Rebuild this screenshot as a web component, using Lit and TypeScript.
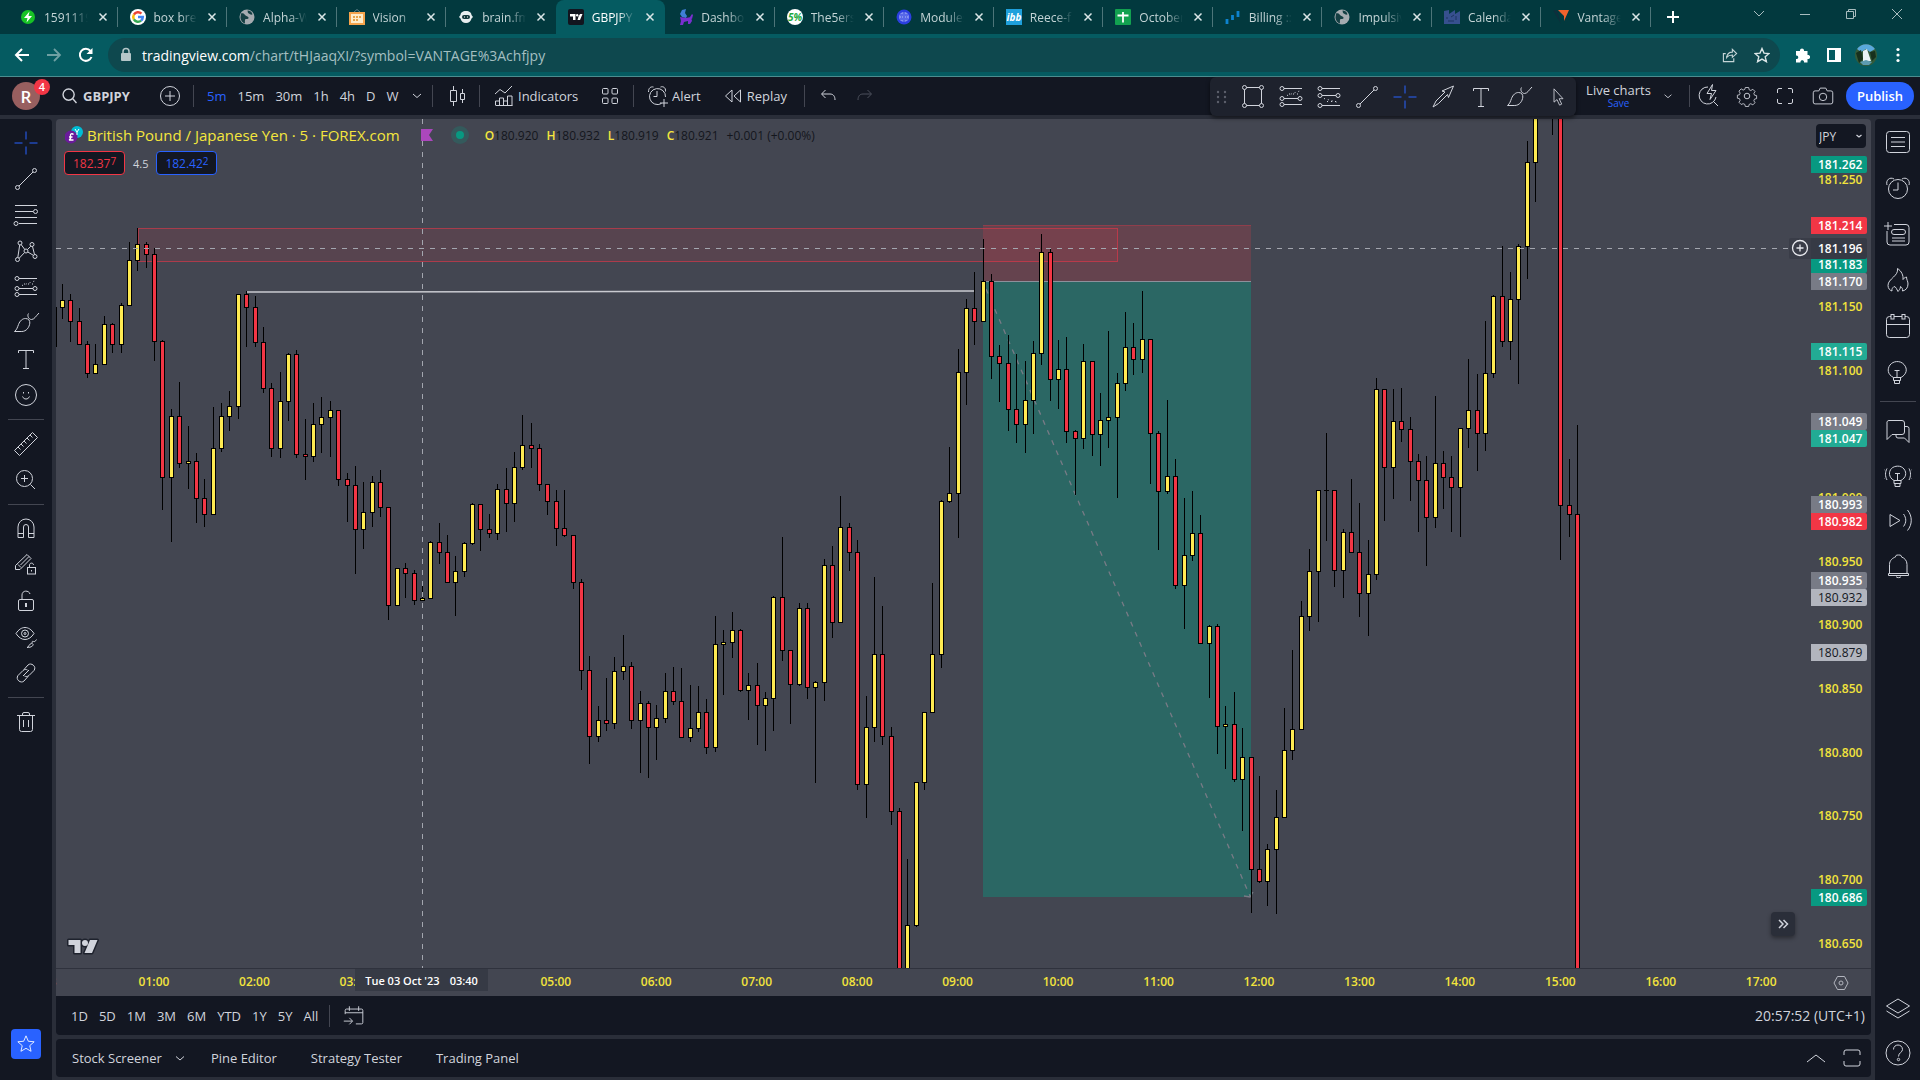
import { LitElement, html, svg, css, TemplateResult } from "lit";
import { customElement } from "lit/decorators.js";
import { classMap } from "lit/directives/class-map.js";

type Art = TemplateResult;

const icon = (body: Art, size = 28, box = 28) => html`<svg class="icon" width=${size} height=${size} viewBox="0 0 ${box} ${box}" fill="none" stroke="currentColor" aria-hidden="true">${body}</svg>`;

/* ---------- icons on a 28px grid ---------- */
const art: Record<string, Art> = {
  cross: svg`<path d="M14 2.5v8M14 17.5v8M2.5 14h8M17.5 14h8"/>`,
  trend: svg`<circle cx="5.5" cy="22.5" r="2"/><circle cx="22.5" cy="5.5" r="2"/><path d="M7 21 21 7"/>`,
  fib: svg`<path d="M3 4.500h22M3 10.500h18M3 16.500h22M7 22.500h18"/><circle cx="23.500" cy="10.500" r="2"/><circle cx="4" cy="22.500" r="2"/>`,
  pattern: svg`<circle cx="8" cy="6" r="2"/><circle cx="20" cy="7.500" r="2"/><circle cx="5.500" cy="22.500" r="2"/><circle cx="14" cy="14" r="2"/><circle cx="23" cy="19.500" r="2"/><path d="M7.700 8 5.800 20.500M9.200 7.700l3.600 4.800M15.500 12.500l3.300-3.300M20.500 9.500l2 8M7.200 21.200l5.300-5.600M15.800 15l5.400 3.200"/>`,
  forecast: svg`<circle cx="5" cy="5.500" r="2"/><circle cx="5" cy="15.500" r="2"/><circle cx="23" cy="15.500" r="2"/><circle cx="5" cy="21.500" r="2"/><path d="M7 5.500h18M7 15.500h14M7 21.500h18"/><path stroke-dasharray="1 3" d="M10 12.500 24 7.500M12 11h11"/>`,
  forecast2: svg`<circle cx="5" cy="5.500" r="2"/><circle cx="5" cy="12.500" r="2"/><circle cx="23" cy="12.500" r="2"/><circle cx="5" cy="22.500" r="2"/><path d="M7 5.500h18M7 12.500h14M7 22.500h18"/><path stroke-dasharray="1 3" d="M9 15.500l14 4M12 18.500h11"/>`,
  brush: svg`<path d="M2.500 22.500c2.500-2 3-4.500 4-7 1.500-3.800 4-6 7-6 3.200 0 4.500 2.300 4.300 4.600-.4 4.200-3.500 8.400-8 8.400z"/><path d="M16.500 4.500c-1.500 2 0 6 3 6 3-.2 4-3 7.500-6.500"/>`,
  text: svg`<path d="M6.500 8V5.500h15V8M14 5.500v18M11 23.500h6"/>`,
  smile: svg`<circle cx="14" cy="14" r="10.500"/><path d="M11.500 11v1.500M16.500 11v1.500M10.500 15.500c.8 1.800 2 2.500 3.500 2.500s2.700-.7 3.500-2.500"/>`,
  ruler: svg`<path d="M2.500 20.500 20.500 2.500 25.500 7.500 7.500 25.500zM6 17l2.500 2.500M9 14l2.500 2.500M12 11l2.500 2.500M15 8l2.500 2.500M18 5l2.500 2.500"/>`,
  zoom: svg`<circle cx="12.500" cy="12.500" r="8"/><path d="M12.500 9v7M9 12.500h7M18.500 18.500l4.500 4.500"/>`,
  magnet: svg`<path d="M6 22.500V12a8 8 0 0 1 16 0v10.500h-5.500V12a2.500 2.500 0 0 0-5 0v10.500zM6 18.500h5.500M16.500 18.500H22"/>`,
  pencilLock: svg`<path d="M3.500 18.500v-4L15 3.500l4 4-11 11zM6 13.500l3 3M8.500 14 17 5.500"/><rect x="15.500" y="16.500" width="8" height="6.500"/><path d="M17.500 16.500V14c0-2.500 4-2.500 4 0M19.500 19v1.500"/>`,
  lock: svg`<rect x="6.500" y="12.500" width="15" height="11" rx="1.500"/><path d="M10 12.500V8c0-5 7-5 8-1"/><path d="M14 16v4" stroke-width="2"/>`,
  eye: svg`<path d="M4 10.500C9 2.500 17 2.500 22 10.500 17 18.500 9 18.500 4 10.500z"/><circle cx="13" cy="10.500" r="3.500"/><circle cx="13" cy="10.500" r="1"/><path d="M15 24.500c2 0 1.500-3.500 4.500-4 3 0 2 4-4.500 4zM20 20c0-2 1-2 1.500-1.500s2 0 3-2"/>`,
  link: svg`<path d="M12 10.500l4-4.500c3-3 9 1.500 6 5.500l-5 5c-1.500 1.300-3 1.300-4.500.5M16 17.500l-4 4.500c-3 3-9-1.500-6-5.500l5-5c1.500-1.300 3-1.300 4.500-.5"/><path d="M11 17l6-6"/>`,
  trash: svg`<path d="M5 7.500h18M7.500 7.500v14a2 2 0 0 0 2 2h9a2 2 0 0 0 2-2v-14M10.500 7V6a1.500 1.500 0 0 1 1.500-1.500h4A1.500 1.500 0 0 1 17.500 6v1M11.500 12v7M16.500 12v7"/>`,
  star: svg`<path d="M14 4.500l2.700 6.300 6.800.6-5.100 4.500 1.500 6.600-5.900-3.500-5.900 3.500 1.500-6.600-5.100-4.500 6.800-.6z"/>`,
  search: svg`<circle cx="12.500" cy="12.500" r="6" stroke-width="1.500"/><path stroke-width="1.500" d="M17 17l4 4.500"/>`,
  plusCircle: svg`<circle cx="14" cy="14" r="9.500"/><path d="M14 9v10M9 14h10"/>`,
  down: svg`<path d="M10 12.500l4 3.500 4-3.500"/>`,
  up: svg`<path d="M5 18l9-7 9 7"/>`,
  candles: svg`<path d="M10.500 4v4M10.500 20v4M7.500 8.500h6v11h-6zM19.500 7v4M19.500 17v4M17.500 11.500h4v6h-4z"/>`,
  indicators: svg`<path d="M5 12l5-4.500 5 3.500 7-7M5.500 23.500h17M5.500 23v-4h4v4M9.500 19v-3h4v7M13.500 19h4v4M17.500 19v-5h4.500v9.500"/>`,
  grid: svg`<rect x="6.500" y="6.500" width="5.500" height="5.500" rx="1"/><rect x="16" y="6.500" width="5.500" height="5.500" rx="1"/><rect x="6.500" y="16" width="5.500" height="5.500" rx="1"/><rect x="16" y="16" width="5.500" height="5.500" rx="1"/>`,
  alert: svg`<path d="M17.500 21.500A8 8 0 1 1 21.500 15M13 9v5.500h-3.500M4.500 10c0-4.500 2.500-5.500 5-5M16.500 5c2.500-1 5.500.5 5 4.500M20 17v8M16 21h8"/>`,
  replay: svg`<path d="M13 8v12l-6.500-6zM21.500 8v12L15 14z"/>`,
  undo: svg`<path d="M11.500 8l-4 4 4 4M8 12h8c3.500 0 5 2.500 5 6"/>`,
  redo: svg`<path d="M16.500 8l4 4-4 4M20 12h-8c-3.500 0-5 2.500-5 6"/>`,
  rect: svg`<circle cx="5.500" cy="4.500" r="2"/><circle cx="22.500" cy="4.500" r="2"/><circle cx="5.500" cy="22.500" r="2"/><circle cx="22.500" cy="22.500" r="2"/><path d="M7.500 4.500h13M7.500 22.500h13M5.500 6.500v14M22.500 6.500v14"/>`,
  arrowTool: svg`<path d="M4 24l3-6 9-9-3-1 11.500-5-5 11.500-1-3-9 9z"/>`,
  pointer: svg`<path d="M10.500 4.500v15.500l3.500-3 3 6.500 2.500-1.200-3-6.300h4.500z"/>`,
  zap: svg`<path d="M13 5a8.500 8.500 0 1 0 8 10M18 19l5 5M17.500 2.500l-5.500 9h4.500l-1.500 6 6-9h-4.500z"/>`,
  gear: svg`<circle cx="14" cy="14" r="3"/><path d="M12 4.500h4l.6 2.700 2 .9 2.400-1.500 2.600 2.700-1.400 2.400.8 2 2.500.5v3.600l-2.500.6-.8 2 1.400 2.300-2.600 2.600-2.400-1.400-2 .8-.6 2.500h-4l-.6-2.500-2-.8L7 24.800l-2.600-2.600 1.400-2.300-.8-2-2.500-.6v-3.600l2.500-.5.8-2L4.400 8.800 7 6.100l2.400 1.500 2-.9z" transform="translate(1.400 .8) scale(.9)"/>`,
  full: svg`<path d="M6.500 11V8A1.500 1.500 0 0 1 8 6.500h3M17 6.500h3A1.500 1.500 0 0 1 21.500 8v3M21.500 17v3a1.500 1.500 0 0 1-1.500 1.500h-3M11 21.500H8A1.500 1.500 0 0 1 6.500 20v-3"/>`,
  camera: svg`<path d="M5.500 8.500h4l1.500-3h6l1.500 3h4a2 2 0 0 1 2 2v10a2 2 0 0 1-2 2h-17a2 2 0 0 1-2-2v-10a2 2 0 0 1 2-2z"/><circle cx="14" cy="15" r="4"/>`,
  calendarGo: svg`<path d="M4.500 12V8A1.500 1.500 0 0 1 6 6.500h16A1.500 1.500 0 0 1 23.500 8v13a1.500 1.500 0 0 1-1.500 1.500h-6M4.500 10.500h19M9 3.500v5M19 3.500v5M3 19.500h9M9 16l3.500 3.500L9 23"/>`,
  maximize: svg`<path d="M6 11V8a2 2 0 0 1 2-2h12a2 2 0 0 1 2 2v3M22 17v3a2 2 0 0 1-2 2H8a2 2 0 0 1-2-2v-3"/>`,
  hex: svg`<path d="M10.500 7.500h7l3.500 6.500-3.500 6.500h-7L7 14z"/><circle cx="14" cy="14" r="2"/>`,
  list: svg`<rect x="2.500" y="3.500" width="23" height="21" rx="3"/><path d="M7 9.500h14M7 14h14M7 18.500h14"/>`,
  clock: svg`<circle cx="14" cy="15" r="9.500"/><path d="M14 8.500V16H9M3 11c-1.500-5 3-8.500 7-6M25 11c1.500-5-3-8.500-7-6"/>`,
  addList: svg`<path d="M10 4.500h12a3 3 0 0 1 3 3V22a3 3 0 0 1-3 3H6a3 3 0 0 1-3-3V11M4 2v8M0 6h8M8 18h13M8 21h13"/><rect x="7.500" y="9.500" width="14" height="5" rx="2.500"/>`,
  flame: svg`<path d="M13.500 2.500c.5 4-1.500 6-4 8.500-3 3-5.500 5-5.500 8.500 0 3 2 5 4 5.500-.5-2 .5-3 2-4.500 2 0 3 3.500 4 5 1-1.500 2.500-2.500 2.500-5 1.500 1 2.500 2.500 2 4.500 3-.5 5.500-3 5.500-7 0-3-1.500-4-1.500-7-1.500.5-2.500 1-3.500 2.500.5-4-1.500-8.500-5.500-11z"/>`,
  calendar: svg`<rect x="2.500" y="4.500" width="23" height="21" rx="3"/><path d="M2.500 12.500h23"/><rect x="7" y="2.500" width="3" height="4.500" fill="#131722"/><rect x="18" y="2.500" width="3" height="4.500" fill="#131722"/>`,
  bulb: svg`<path d="M9.500 19.500c-6-3-6.500-8.500-3.500-12.500s10-5 14-.5 2.500 10-3 13zM9.500 19.500v3h7v-3M10.500 23v2.500h5V23M13 19v-6M10.500 12.500h5"/>`,
  chat: svg`<path d="M5 3.500h13a2.500 2.500 0 0 1 2.500 2.500v9a2.500 2.500 0 0 1-2.500 2.500H8l-5 5V6a2 2 0 0 1 2-2.500zM20.500 9.500h2.500a2 2 0 0 1 2 2v14l-4.500-4.500H14a2 2 0 0 1-2-2v-1"/>`,
  bulbLive: svg`<path d="M10 18.500c-5.500-3-5.500-9-2.500-12s9.500-3.500 12.500.5 2 8.500-3 11.500zM10 18.500v3h7v-3M11 22v2.500h5V22M13.500 18v-6M11 11.500h5M3 6.500c-2 3.500-2 8 0 11.500M0 7.500c-1.500 3-1.500 6.500 0 9.500M25 6.500c2 3.500 2 8 0 11.500M28 7.500c1.500 3 1.500 6.500 0 9.500"/>`,
  stream: svg`<path d="M6 7.500v12l10-6zM19.500 7c3 4 3 8.500 0 12.500M23.500 3c5 6 5 14.500 0 20.500"/>`,
  bell: svg`<path d="M5.500 21.500v-9c0-4 3-6.500 6-7.500 0-1.500.5-2 3-2s3 .5 3 2c3 1 5.500 3.500 5.500 7.500v9M4.500 21.500h20v2h-20zM12 24.500c.5 1.500 4.500 1.500 5 0"/>`,
  layers: svg`<path d="M14 5l11.500 7L14 19 2.500 12zM2.500 17 14 24l11.500-7"/>`,
  help: svg`<circle cx="14" cy="14" r="12"/><path d="M9.500 10.500c0-6 9-6 9 0 0 3-4 3-4 7"/><circle cx="14.500" cy="20.500" r="1.200"/>`,
};

/* ---------- favicons on a 16px grid ---------- */
const favicons: Record<string, Art> = {
  bolt: svg`<circle cx="8" cy="8" r="7" fill="#17c225"/><path fill="#fff" d="M9.500 2.500 4 9h3.500l-1 4.500L12 7H8.500z"/>`,
  google: svg`<circle cx="8" cy="8" r="8" fill="#fff"/><g fill="none" stroke-width="2.500"><path stroke="#ea4335" d="M3.900 5.600A4.800 4.800 0 0 1 11.400 4.600"/><path stroke="#fbbc05" d="M3.900 5.600a4.800 4.800 0 0 0 0 4.800"/><path stroke="#34a853" d="M3.900 10.400a4.800 4.800 0 0 0 7.200 1.200"/><path stroke="#4285f4" d="M11.100 11.600A4.800 4.800 0 0 0 12.800 8H8"/></g>`,
  globe: svg`<circle cx="8" cy="8" r="7.500" fill="#a5abb0"/><path fill="#153f43" d="M2 4.500c2-.5 3 0 4 1.500s3 1 3.500 2.500-1 1.500-2.500 1.500-1 2.500-1 4.500c-2-.5-4.500-3-4.500-6zM8.500 1.500c2.500 0 4.500 1.500 5 4-2 .5-3-.5-4.500-1.500z"/>`,
  board: svg`<rect x="0" y="3" width="16" height="13" fill="#f6a44c"/><rect x="2" y="5" width="12" height="9" fill="#fdeccb"/><path d="M5 3 8 .5 11 3" fill="none" stroke="#5f7f8a"/><path d="M4 8h2M7 8h2M10 8h2M4 11h2M7 11h2" stroke="#e8a44b" stroke-width="2"/>`,
  brain: svg`<path fill="#e8eef0" d="M8 2c3.500 0 5.500 2 5.500 4L15 8l-1.500 1.500C13 12 11 14 8 14s-5-2-5.500-4.500L1 8l1.500-2C2.500 4 4.500 2 8 2z"/><rect x="4" y="6" width="8" height="4" rx="2" fill="#12373b"/><path d="M6 8h1M9 8h1" stroke="#fff"/>`,
  tv: svg`<rect width="16" height="16" rx="2" fill="#12151f"/><path fill="#fff" d="M2 5h5.500v6H5V7.500H2zM10.500 7.500 12 5h2.500L12 11H9.500z"/><circle cx="9.200" cy="6.300" r="1.200" fill="#fff"/>`,
  dash: svg`<path fill="#3f7fd6" d="M5 1l4-1-1 4 2 3-1 2-4-1-2-3z"/><path fill="#7a2fd0" d="M3 8l6 1 5-1 1 4-2 3h-2v-3l-4 1-1 3H3l1-4zM13 8l2-3 1 1-1 4z"/>`,
  fivers: svg`<circle cx="8" cy="8" r="8" fill="#fff"/><text x="8" y="12" text-anchor="middle" font-size="10" font-weight="700" font-style="italic" fill="#22a83f">5%</text>`,
  module: svg`<circle cx="8" cy="8" r="7.500" fill="#2b3fe0"/><circle cx="8" cy="8" r="5" fill="#8492f0"/><path stroke="#2b3fe0" d="M8 3v10M4 6h3M9 6h3M4 10h3M9 10h3M5 8h1M10 8h1" fill="none"/>`,
  ibb: svg`<rect width="16" height="16" fill="#1fa0dc"/><text x="8" y="12" text-anchor="middle" font-size="10" font-weight="700" font-style="italic" fill="#fff">ibb</text>`,
  sheet: svg`<rect width="16" height="16" rx="1" fill="#12a150"/><path d="M8 3v10.500M2.500 6.500h11" stroke="#fff" stroke-width="1.800"/>`,
  bars: svg`<path d="M2 10v5M7.500 6V11M13 2v6" stroke="#0d83cf" stroke-width="2.800"/>`,
  cal: svg`<path fill="#37508f" d="M0 2l5-1v4l6-4v4l5-3v13H0z"/><path stroke="#1d3560" d="M2 9h2M7 8l3-2M12 7v4M4 12h6"/>`,
  vantage: svg`<path fill="#f3622d" d="M5 1h11l-5 11v-5z"/><path fill="#0e2f3c" d="M0 1l4 1 4 13z"/>`,
};

const tabs: [string, string][] = [
  ["bolt", "1591119"], ["google", "box breathing"], ["globe", "Alpha-Wave"], ["board", "Vision"], ["brain", "brain.fm"],
  ["tv", "GBPJPY"], ["dash", "Dashboard"], ["fivers", "The5ers"], ["module", "Modules"], ["ibb", "Reece-f"],
  ["sheet", "October"], ["bars", "Billing ::"], ["globe", "Impulsive"], ["cal", "Calendar"], ["vantage", "Vantage"],
];

/* ---------- chart data: high, body top, body bottom, low, direction ---------- */
const candles = `307 307 347 347 d|284 300 308 319 u|294 300 322 342 d|308 321 345 345 d|341 344 374 378 d|344 364 374 374 u|316 324 365 365 u|323 324 345 353 d|303 305 345 353 u|242 260 306 306 u|228 244 261 271 u|242 244 255 268 d|248 254 342 361 d|340 341 478 510 d|409 416 478 542 u|382 416 464 468 d|426 461 464 489 u|453 461 499 523 d|479 498 515 527 d|407 448 515 515 u|403 416 449 452 u|391 406 417 431 u|294 294 407 419 u|291 294 308 347 d|296 307 343 347 d|327 342 389 393 d|383 388 449 457 d|372 401 449 458 u|353 354 402 421 u|350 354 455 458 d|419 454 457 480 d|403 424 457 462 u|397 417 425 453 u|401 410 418 457 u|410 410 480 486 d|473 479 486 522 d|466 485 530 574 d|482 512 530 549 u|476 482 513 527 u|470 482 508 517 d|507 507 606 620 d|568 568 606 606 u|563 568 574 598 d|570 573 601 605 d|586 598 601 601 u|541 542 599 599 u|523 542 553 564 d|535 552 583 583 d|556 571 583 616 u|542 543 572 577 u|503 504 544 545 u|504 504 530 551 d|514 529 534 538 d|484 489 534 540 u|468 489 504 532 d|452 467 504 522 u|415 445 468 470 u|423 445 449 468 d|444 448 485 491 d|484 484 502 515 d|490 501 529 546 d|490 528 536 537 d|535 535 583 589 d|579 582 671 690 d|656 670 737 764 d|706 720 737 742 u|678 720 724 731 d|657 671 724 729 u|635 666 672 680 u|662 666 721 729 d|691 703 721 773 u|701 703 728 778 d|705 718 728 760 u|673 691 719 723 u|667 691 702 705 d|668 701 738 738 d|685 728 738 742 u|686 712 729 732 u|699 712 748 754 d|616 644 748 752 u|630 642 645 695 u|612 630 643 658 u|629 630 691 692 d|673 685 691 720 u|663 685 706 745 d|692 698 706 751 u|596 597 699 731 u|537 597 651 661 d|650 650 685 724 d|603 608 685 686 u|603 608 688 699 d|681 682 688 783 u|559 565 683 701 u|546 565 623 638 d|496 527 623 623 u|523 527 553 571 d|540 552 785 790 d|696 727 785 818 u|577 654 728 742 u|606 654 737 745 d|727 736 812 825 d|808 811 980 980 d|859 925 980 980 u|782 782 926 927 u|712 712 783 790 u|583 654 713 713 u|500 501 655 668 u|447 493 502 503 u|349 372 494 538 u|299 308 373 405 u|272 308 322 345 d|239 281 322 322 u|274 281 357 379 d|345 356 364 402 d|335 363 410 431 d|354 409 425 443 d|361 400 425 453 u|341 353 401 434 u|234 252 354 365 u|249 252 380 401 d|340 369 380 409 u|337 369 432 443 d|430 431 439 495 d|344 361 439 449 u|361 361 435 456 d|393 420 435 466 u|331 417 421 448 u|373 383 418 498 u|312 347 384 391 u|323 347 360 375 d|291 339 360 373 u|339 339 434 484 d|431 433 492 550 d|400 476 492 494 u|459 476 586 589 d|498 555 586 629 u|491 533 556 561 u|515 533 644 644 d|625 626 644 698 u|624 626 727 754 d|706 724 727 769 u|692 724 780 782 d|728 757 780 831 u|757 757 870 913 d|776 869 882 883 d|844 849 882 906 u|790 817 850 914 u|708 750 818 818 u|650 729 751 760 u|601 616 730 730 u|549 571 617 631 u|490 490 572 622 u|433 490 491 541 u|490 490 571 587 d|529 532 571 598 u|479 532 553 553 d|503 552 594 617 d|540 574 594 636 u|378 389 575 580 u|389 389 468 521 d|389 421 468 499 u|388 421 430 442 d|417 429 462 501 d|454 461 481 532 d|456 480 518 566 d|396 463 518 528 u|451 463 478 509 d|456 477 488 532 d|428 428 488 537 u|359 410 429 448 u|374 410 434 471 d|321 373 434 451 u|295 296 374 378 u|246 296 342 347 d|272 299 342 360 u|244 246 300 384 u|141 162 247 279 u|100 100 163 202 u|90 90 90 90 u|90 90 91 135 u|100 100 506 560 d|459 505 515 537 d|425 514 980 980 d`
  .split("|")
  .map((row, i) => {
    const [h, t, b, l, dir] = row.split(" ");
    return { x: Math.round(53.63 + 8.37 * i), h: +h, t: +t, b: +b, l: +l, up: dir === "u" };
  });

const PLOT = { left: 56, top: 119, width: 1755, height: 849 };
const atY = (y: number) => `top:${(((y - PLOT.top) / PLOT.height) * 100).toFixed(3)}%`;
const atX = (x: number) => `left:${(((x - PLOT.left) / PLOT.width) * 100).toFixed(3)}%`;

const prices: [string, number, string][] = [
  ["181.250", 180, ""], ["181.150", 307, ""], ["181.100", 371, ""], ["181.000", 498, ""], ["180.950", 562, ""],
  ["180.900", 625, ""], ["180.850", 689, ""], ["180.800", 753, ""], ["180.750", 816, ""], ["180.700", 880, ""], ["180.650", 944, ""],
  ["181.262", 165, "green"], ["181.214", 226, "red"], ["181.183", 265, "green"], ["181.170", 282, "grey"],
  ["181.115", 352, "teal"], ["181.049", 422, "grey"], ["181.047", 439, "teal"], ["180.993", 505, "grey"], ["180.982", 522, "red"],
  ["180.935", 581, "grey"], ["180.932", 598, "pale"], ["180.879", 653, "pale"], ["180.686", 898, "green"],
];
/* the 04:00 tick lies wholly under the crosshair stamp and is skipped */
const hours = Array.from({ length: 17 }, (_, i) => i + 1).filter((h) => h !== 4);

@customElement("chrome-bar")
class ChromeBar extends LitElement {
  static styles = css`
    :host { display: block; font-family: "Open Sans", "Noto Sans", sans-serif; color: #c4d4d6; }
    button { background: none; border: 0; padding: 0; margin: 0; color: inherit; font: inherit; display: flex; align-items: center; justify-content: center; }
    .icon { display: block; flex: none; }
    .strip { display: flex; height: 34px; background: #02393e; padding-left: 8px; align-items: stretch; }
    .tabs { display: flex; flex: 0 1 1643px; min-width: 0; }
    .tab { flex: 1 1 0; min-width: 0; display: flex; align-items: center; padding: 0 8px 0 12px; gap: 8px; position: relative; font-size: 12px; }
    .tab::after { content: ""; position: absolute; right: 0; top: 7px; height: 20px; width: 1px; background: #4d7579; }
    .tab.before::after, .tab.active::after { display: none; }
    .tab.active { background: #055b61; border-radius: 8px 8px 0 0; color: #fff; }
    .label { flex: 1; overflow: hidden; white-space: nowrap; mask-image: linear-gradient(90deg, #000 60%, transparent); }
    .close { width: 14px; color: #dbe6e7; }
    .add { width: 44px; color: #fff; }
    .spacer { flex: 1; }
    .win { width: 46px; height: 28px; color: #a9bdbf; }
    .bar { display: flex; align-items: center; height: 42px; background: #055b61; border-bottom: 1px solid #4b8d8f; color: #fff; padding: 0 6px; }
    .nav { width: 32px; height: 32px; }
    .dim { color: #6fa0a3; }
    .omni { flex: 1; display: flex; align-items: center; height: 34px; border-radius: 17px; background: #0e484e; margin: 0 6px; padding: 0 2px 0 10px; }
    .address { flex: 1; font-size: 14px; padding-left: 8px; white-space: nowrap; color: #a4bfc1; }
    .address b { color: #fff; font-weight: 400; }
  `;

  render() {
    return html`
      <div class="strip">
        <div class="tabs">
          ${tabs.map(([fav, name], i) => html`
            <div class=${classMap({ tab: true, active: i === 5, before: i === 4 })}>
              <svg class="icon" width="16" height="16" viewBox="0 0 16 16" aria-hidden="true">${favicons[fav]}</svg>
              <span class="label">${name}</span>
              <button class="close" aria-label="Close tab">${icon(svg`<path stroke-width="1.500" d="M3.500 3.500l7 7M10.500 3.500l-7 7"/>`, 14, 14)}</button>
            </div>`)}
        </div>
        <button class="add" aria-label="New tab">${icon(svg`<path stroke-width="2" d="M7 1v12M1 7h12"/>`, 14, 14)}</button>
        <div class="spacer"></div>
        <button class="win" aria-label="Search tabs">${icon(svg`<path d="M2 4l5 5 5-5"/>`, 14, 14)}</button>
        <button class="win" aria-label="Minimize">${icon(svg`<path d="M2 7.500h10"/>`, 14, 14)}</button>
        <button class="win" aria-label="Restore">${icon(svg`<path d="M2.500 4.500h7v7h-7zM4.500 4V2.500h7v7H10"/>`, 14, 14)}</button>
        <button class="win" aria-label="Close">${icon(svg`<path d="M2 2l10 10M12 2 2 12"/>`, 14, 14)}</button>
      </div>
      <div class="bar">
        <button class="nav" aria-label="Back">${icon(svg`<path stroke-width="2" d="M15 8H2M8 2 2 8l6 6"/>`, 16, 16)}</button>
        <button class="nav dim" aria-label="Forward">${icon(svg`<path stroke-width="1.800" d="M1 8h13M8 2l6 6-6 6"/>`, 16, 16)}</button>
        <button class="nav" aria-label="Reload">${icon(svg`<path stroke-width="2" d="M13.500 10A6 6 0 1 1 12.500 4"/><path fill="currentColor" stroke="none" d="M14.500 1v6h-6z"/>`, 16, 16)}</button>
        <div class="omni">
          ${icon(svg`<rect x="3" y="6" width="10" height="8" rx="1" fill="#b4c6c8" stroke="none"/><path stroke="#b4c6c8" stroke-width="1.500" d="M5 7V4.500a3 3 0 0 1 6 0V7"/>`, 16, 16)}
          <span class="address"><b>tradingview.com</b>/chart/tHJaaqXI/?symbol=VANTAGE%3Achfjpy</span>
          <button class="nav" aria-label="Share">${icon(svg`<path stroke="#c4d4d6" stroke-width="1.200" d="M4 7H1.500v8.500h11V12M5 11c.5-4 2.500-5.500 6-5.500V2.500L15.500 7 11 11V8.500c-3 0-4.500.5-6 2.500z"/>`, 16, 17)}</button>
          <button class="nav" aria-label="Bookmark">${icon(svg`<path stroke="#dbe6e7" stroke-width="1.400" d="M8 1.500l2 4.600 5 .4-3.800 3.300 1.200 4.900L8 12.100l-4.400 2.600 1.200-4.900L1 6.500l5-.4z"/>`, 16, 16)}</button>
        </div>
        <button class="nav" aria-label="Extensions">${icon(svg`<path fill="#fff" stroke="none" d="M2 4h4c-.5-3.500 4.500-3.500 4 0h3.500v4c3.500-.5 3.500 4.500 0 4v3.500H10c.5-3-4-3-3.500 0H2V12c3 .5 3-4 0-3.500z"/>`, 16, 16)}</button>
        <button class="nav" aria-label="Side panel">${icon(svg`<path stroke-width="2" d="M2 2h12v12H2z"/><path fill="#fff" stroke="none" d="M9 2h5v12H9z"/>`, 16, 16)}</button>
        <button class="nav" aria-label="Profile">${icon(svg`<g stroke="none"><circle cx="11" cy="11" r="11" fill="#345b3a"/><path fill="#5aa8dc" d="M2 5a11 11 0 0 1 18 0l-5 3-4-3-5 3z"/><path fill="#e9f2f5" d="M8 7l4-2 4 12H8z"/><path fill="#17301d" d="M1 9l5-3 2 9-4 4zM15 8l5-1 1 6-4 4z"/><path fill="#5d9bb0" d="M5 18l6-2 6 2-3 3H8z"/></g>`, 22, 22)}</button>
        <button class="nav" aria-label="Menu">${icon(svg`<g fill="#fff" stroke="none"><circle cx="8" cy="2.500" r="1.600"/><circle cx="8" cy="8" r="1.600"/><circle cx="8" cy="13.500" r="1.600"/></g>`, 16, 16)}</button>
      </div>`;
  }
}

@customElement("chart-plot")
class ChartPlot extends LitElement {
  static styles = css`
    :host { display: grid; grid-template-columns: minmax(0, 1fr) 60px; grid-template-rows: minmax(0, 1fr) 28px; background: #434651; border-radius: 4px 4px 0 0; overflow: hidden; font-family: "Open Sans", "Noto Sans", sans-serif; font-size: 12px; color: #f2e33c; }
    button, select { font: inherit; margin: 0; padding: 0; }
    .plot { position: relative; overflow: hidden; }
    .canvas { display: block; width: 100%; height: 100%; position: absolute; left: 0; top: 0; }
    .legend { position: relative; padding: 6px 0 0 9px; width: max-content; }
    .line { display: flex; align-items: center; height: 20px; white-space: nowrap; }
    .title { font-size: 15px; color: #f5e63d; margin: 0 20px 0 4px; font-weight: 400; }
    .icon { display: block; flex: none; }
    .ohlc { margin-left: 13px; display: flex; gap: 8px; color: #14161d; }
    .ohlc b { color: #f5e63d; font-weight: 600; }
    .quotes { display: flex; align-items: center; gap: 8px; margin: 6px 0 0 -1px; color: #d1d4dc; font-size: 11px; }
    .quote { width: 61px; height: 24px; box-sizing: border-box; background: #131722; border: 1px solid; border-radius: 4px; font-size: 12px; display: flex; align-items: center; justify-content: center; }
    .quote sup { font-size: 10px; line-height: 10px; align-self: flex-start; padding-top: 4px; }
    .sell { color: #f23645; }
    .buy { color: #2962ff; }
    .mark { position: absolute; left: 11px; bottom: 13px; }
    .jump { position: absolute; right: 16px; bottom: 32px; width: 24px; height: 24px; border: 0; border-radius: 4px; background: #2a2e39; color: #d1d4dc; display: flex; align-items: center; justify-content: center; box-shadow: 0 2px 4px #0006; }
    .prices { position: relative; }
    .price { position: absolute; left: 0; width: 56px; height: 17px; line-height: 17px; margin-top: -9px; padding-left: 7px; box-sizing: border-box; font-weight: 600; }
    .green, .teal, .red, .grey, .pale, .now { color: #fff; border-radius: 0 2px 2px 0; }
    .green { background: #089981; }
    .teal { background: #22ab94; }
    .red { background: #f23645; }
    .grey { background: #787b86; }
    .pale { background: #b2b5be; color: #131722; font-weight: 400; }
    .now { background: #363a45; height: 21px; line-height: 21px; margin-top: -10px; }
    .plus { position: absolute; right: 60px; width: 22px; height: 21px; margin-top: -10px; background: #3a3d48; border: 0; border-radius: 2px 0 0 2px; color: #e8e9ee; display: flex; align-items: center; justify-content: center; }
    .currency { position: absolute; left: 5px; top: 5px; width: 50px; height: 24px; border: 0; border-radius: 4px; background: #131722; color: #d1d4dc; appearance: none; padding-left: 3px; z-index: 1; }
    .caret { position: absolute; left: 41px; top: 10px; z-index: 2; color: #d1d4dc; pointer-events: none; }
    .times { position: relative; border-top: 1px solid #2f323d; overflow: hidden; font-weight: 600; }
    .time { position: absolute; top: 4px; width: 40px; margin-left: -20px; text-align: center; line-height: 18px; }
    .stamp { position: absolute; top: 0; width: 133px; height: 22px; margin-left: -67px; background: #363a45; color: #fff; display: flex; gap: 10px; justify-content: center; align-items: center; white-space: nowrap; font-size: 11px; }
    .corner { border: 0; border-top: 1px solid #2f323d; background: none; color: #b2b5be; display: flex; align-items: center; justify-content: center; }
  `;

  private candle(c: (typeof candles)[number]) {
    return svg`<rect x=${c.x} y=${c.h} width="1" height=${c.l - c.h}/><rect x=${c.x - 2} y=${c.t} width="5" height=${c.b - c.t}/>${c.b - c.t > 2
      ? svg`<rect fill=${c.up ? "#ffeb52" : "#f23645"} x=${c.x - 1} y=${c.t + 1} width="3" height=${c.b - c.t - 2}/>`
      : ""}`;
  }

  render() {
    return html`
      <div class="plot">
        <svg class="canvas" viewBox="56 119 1755 849" preserveAspectRatio="none" shape-rendering="crispEdges" role="img" aria-label="GBPJPY five minute candles">
          <rect x="138.500" y="228.500" width="979" height="33" fill="#f23645" fill-opacity=".12" stroke="#c23a4a" stroke-opacity=".8"/>
          <rect x="983" y="225" width="268" height="56" fill="#f23645" fill-opacity=".2"/>
          <path d="M983 225.500h268" stroke="#f23645" stroke-opacity=".3"/>
          <rect x="983" y="281" width="268" height="616" fill="#089981" fill-opacity=".4"/>
          <path d="M983 281.500h268" stroke="#8d909b"/>
          <g fill="none" stroke="#787b86" stroke-width="1.300" shape-rendering="auto"><path d="M986 289 1250 896" stroke-dasharray="5 6"/><path d="M1244 896l6 1 3-5"/></g>
          <path d="M247 292 974 291" stroke="#c9cad0" stroke-width="1.500" shape-rendering="auto"/>
          <g fill="#000">${candles.map((c) => this.candle(c))}</g>
          <path d="M56 248.500h1733M422.500 119v849" stroke="#a3a6af" stroke-dasharray="5 6"/>
        </svg>
        <div class="legend">
          <div class="line">
            ${icon(svg`<g stroke="none"><circle cx="12" cy="6" r="6" fill="#00bcd4"/><circle cx="6" cy="11" r="6.500" fill="#6a1b9a"/></g><path stroke="#fff" d="M10 3l2 3 2-3M12 6v3"/><path stroke="#fff" stroke-width="1.300" d="M8.500 8.500C7 7 5 8 5.500 10S5.500 13.500 4 14h4.500M4 11h3.500"/>`, 18, 18)}
            <h1 class="title">British Pound / Japanese Yen · 5 · FOREX.com</h1>
            ${icon(svg`<path fill="#ab47bc" stroke="none" d="M1 1h12l-4 6 4 6H1z"/>`, 14, 14)}
            ${icon(svg`<g stroke="none"><circle cx="26" cy="19" r="9" fill="#089981" fill-opacity=".25"/><circle cx="26" cy="19" r="4" fill="#089981"/></g>`, 38, 38)}
            <div class="ohlc"><span><b>O</b>180.920</span><span><b>H</b>180.932</span><span><b>L</b>180.919</span><span><b>C</b>180.921</span><span>+0.001 (+0.00%)</span></div>
          </div>
          <div class="quotes">
            <button class="quote sell">182.37<sup>7</sup></button><span>4.5</span><button class="quote buy">182.42<sup>2</sup></button>
          </div>
        </div>
        <svg class="mark" width="32" height="17" viewBox="0 0 32 17" aria-hidden="true"><path fill="#d1d4dc" stroke="#1e222d" stroke-width="3" stroke-linejoin="round" paint-order="stroke" d="M1.500 2h12v13H7.500V7h-6zM23 2h7.500L25 15h-7.500zM15 5a3 3 0 1 0 6 0 3 3 0 1 0-6 0z"/></svg>
        <button class="jump" aria-label="Scroll to latest">${icon(svg`<path stroke-width="1.500" d="M3 3l4 4-4 4M7.500 3l4 4-4 4"/>`, 14, 14)}</button>
      </div>
      <div class="prices">
        <select class="currency" aria-label="Currency"><option>JPY</option></select>
        <svg class="icon caret" width="14" height="14" viewBox="0 0 14 14" fill="none" stroke="currentColor"><path stroke-width="1.300" d="M4.500 6 7 8l2.500-2"/></svg>
        ${prices.map(([p, y, tone]) => html`<span class="price ${tone}" style=${atY(y)}>${p}</span>`)}
        <span class="price now" style=${atY(248)}>181.196</span>
        <button class="plus" style=${atY(248)} aria-label="Add at price">${icon(svg`<circle cx="10" cy="10" r="7.500" stroke-width="1.300"/><path stroke-width="1.300" d="M10 6.500v7M6.500 10h7"/>`, 20, 20)}</button>
      </div>
      <div class="times">
        <span class="time" style=${atX(53)}>3</span>
        ${hours.map((h) => html`<span class="time" style=${atX(154 + 100.45 * (h - 1))}>${String(h).padStart(2, "0")}:00</span>`)}
        <span class="stamp" style=${atX(422)}><span>Tue 03 Oct '23</span><span>03:40</span></span>
      </div>
      <button class="corner" aria-label="Axis settings">${icon(art.hex)}</button>`;
  }
}

@customElement("app-root")
class AppRoot extends LitElement {
  static styles = css`
    :host { display: flex; flex-direction: column; height: 100vh; background: #2a2e39; color: #d1d4dc; font-family: "Open Sans", "Noto Sans", sans-serif; font-size: 13px; overflow: hidden; }
    button { background: none; border: 0; padding: 0; margin: 0; color: inherit; font: inherit; display: flex; align-items: center; justify-content: center; white-space: nowrap; }
    .icon { display: block; flex: none; }
    .head { display: flex; align-items: stretch; height: 38px; background: #131722; }
    .group { display: flex; align-items: center; position: relative; }
    .group.cut::after { content: ""; position: absolute; right: 0; top: 8px; height: 22px; width: 1px; background: #434651; }
    .me { width: 28px; height: 28px; border-radius: 50%; background: #985f5f; color: #fff; font-size: 17px; font-weight: 600; margin: 0 17px 0 12px; position: relative; }
    .badge { position: absolute; left: 22px; top: -3px; width: 16px; height: 16px; border-radius: 50%; background: #f23645; font-size: 11px; line-height: 16px; text-align: center; }
    .symbol { font-weight: 700; width: 78px; justify-content: flex-start; }
    .gap { margin-left: 21px; margin-right: 10px; }
    .spans { gap: 11px; padding: 0 0 0 13px; width: 226px; }
    .on { color: #2962ff; }
    .tight { width: 47px; justify-content: center; }
    .wide { padding-left: 10px; }
    .ind { width: 144px; gap: 18px; }
    .al { width: 161px; gap: 18px; }
    .ub { width: 84px; gap: 9px; padding-left: 9px; }
    .faint { color: #4d515c; }
    .spring { flex: 1; }
    .tools { background: #1e222d; border-radius: 6px; padding-left: 4px; margin-bottom: -1px; box-shadow: 0 2px 4px #0008; z-index: 1; }
    .grip { width: 20px; }
    .slot { width: 38px; height: 38px; }
    .layout { width: 114px; gap: 5px; }
    .name { display: flex; flex-direction: column; align-items: center; line-height: 17px; }
    .save { font-size: 10px; line-height: 13px; color: #2962ff; margin-top: -2px; }
    .publish { align-self: center; width: 68px; height: 28px; border-radius: 14px; background: #2962ff; color: #fff; font-weight: 600; margin: 0 6px 0 4px; }
    .body { flex: 1; min-height: 0; display: grid; grid-template-columns: 52px minmax(0, 1fr) 45px; gap: 4px; padding-top: 4px; }
    .side { background: #131722; display: flex; flex-direction: column; align-items: center; border-radius: 0 4px 0 0; }
    .left { padding: 6px 0 21px; }
    .left button { width: 36px; height: 36px; }
    .rule { width: 36px; height: 1px; background: #434651; margin: 6px 0; flex: none; }
    .left .fav { width: 30px; height: 30px; background: #2962ff; border-radius: 4px; color: #fff; }
    .right { padding: 0 0 5px; border-radius: 4px 0 0 0; }
    .right button { width: 45px; height: 46px; }
    .right .low { height: 45px; }
    .main { display: flex; flex-direction: column; min-width: 0; }
    chart-plot { flex: 1; min-height: 0; }
    .ranges { display: flex; align-items: center; height: 39px; background: #131722; border-radius: 0 0 4px 4px; padding: 0 6px 0 15px; gap: 11px; }
    .divider { width: 1px; height: 22px; background: #434651; }
    .zone { margin-left: auto; font-size: 14px; }
    .panels { display: flex; align-items: center; height: 38px; background: #131722; border-radius: 4px; margin: 4px 0 3px; padding: 0 5px 0 16px; gap: 34px; }
    .screener { gap: 4px; margin-right: -17px; }
    .ends { margin-left: auto; display: flex; gap: 8px; }
  `;

  private tool(name: string, label: string, cls = "slot", size = 28) {
    return html`<button class=${cls} aria-label=${label}>${icon(art[name], size)}</button>`;
  }

  render() {
    return html`
      <chrome-bar></chrome-bar>
      <header class="head">
        <div class="group cut">
          <button class="me" aria-label="Account">R<span class="badge">4</span></button>
          <button class="symbol">${icon(art.search, 26)}GBPJPY</button>
          ${this.tool("plusCircle", "Compare", "gap")}
        </div>
        <div class="group cut spans">
          <button class="on">5m</button><button>15m</button><button>30m</button><button>1h</button><button>4h</button><button>D</button><button>W</button>
          <button aria-label="More intervals">${icon(svg`<path d="M3 5l4 3.500L11 5"/>`, 14, 14)}</button>
        </div>
        <div class="group cut tight">${this.tool("candles", "Bar style", "")}</div>
        <div class="group cut wide ind"><button>${icon(art.indicators)}Indicators</button>${this.tool("grid", "Templates", "")}</div>
        <div class="group cut wide al"><button>${icon(art.alert)}Alert</button><button>${icon(art.replay)}Replay</button></div>
        <div class="group ub">${this.tool("undo", "Undo", "")}${this.tool("redo", "Redo", "faint")}</div>
        <div class="spring"></div>
        <div class="group tools">
          <span class="grip">${icon(svg`<g fill="#5d606b" stroke="none">${[4, 9, 14].map((y) => svg`<circle cx="4" cy=${y} r="1.200"/><circle cx="11" cy=${y} r="1.200"/>`)}</g>`, 18, 18)}</span>
          ${this.tool("rect", "Rectangle")}${this.tool("forecast", "Long position")}${this.tool("forecast2", "Short position")}${this.tool("trend", "Trend line")}
          ${this.tool("cross", "Cross", "slot on")}${this.tool("arrowTool", "Arrow")}${this.tool("text", "Text")}${this.tool("brush", "Brush")}${this.tool("pointer", "Pointer", "slot", 24)}
        </div>
        <button class="layout"><span class="name">Live charts<span class="save">Save</span></span>${icon(art.down, 24)}</button>
        <span class="group cut"></span>
        ${this.tool("zap", "Quick search")}${this.tool("gear", "Settings", "slot", 26)}${this.tool("full", "Fullscreen")}${this.tool("camera", "Snapshot", "slot", 26)}
        <button class="publish">Publish</button>
      </header>
      <div class="body">
        <nav class="side left" aria-label="Drawing tools">
          ${this.tool("cross", "Cross", "on")}${this.tool("trend", "Trend line", "")}${this.tool("fib", "Fibonacci", "")}${this.tool("pattern", "Patterns", "")}
          ${this.tool("forecast", "Prediction", "")}${this.tool("brush", "Brush", "")}${this.tool("text", "Text", "")}${this.tool("smile", "Icons", "")}
          <div class="rule"></div>
          ${this.tool("ruler", "Measure", "")}${this.tool("zoom", "Zoom in", "")}
          <div class="rule"></div>
          ${this.tool("magnet", "Magnet", "")}${this.tool("pencilLock", "Keep drawing", "")}${this.tool("lock", "Lock", "")}${this.tool("eye", "Hide", "")}${this.tool("link", "Sync", "")}
          <div class="rule"></div>
          ${this.tool("trash", "Remove", "")}
          <div class="spring"></div>
          ${this.tool("star", "Favorites", "fav", 24)}
        </nav>
        <main class="main">
          <chart-plot></chart-plot>
          <div class="ranges">
            ${["1D", "5D", "1M", "3M", "6M", "YTD", "1Y", "5Y", "All"].map((r) => html`<button>${r}</button>`)}
            <span class="divider"></span>
            ${this.tool("calendarGo", "Go to date", "", 26)}
            <button class="zone">20:57:52 (UTC+1)</button>
          </div>
          <div class="panels">
            <button class="screener">Stock Screener${icon(art.down)}</button><button>Pine Editor</button><button>Strategy Tester</button><button>Trading Panel</button>
            <span class="ends">${this.tool("up", "Open panel", "")}${this.tool("maximize", "Maximize panel", "")}</span>
          </div>
        </main>
        <nav class="side right" aria-label="Widgets">
          ${this.tool("list", "Watchlist", "")}${this.tool("clock", "Alerts", "")}${this.tool("addList", "Data window", "")}${this.tool("flame", "Hotlists", "")}${this.tool("calendar", "Calendar", "")}${this.tool("bulb", "Ideas", "")}
          <div class="rule"></div>
          ${this.tool("chat", "Chat", "low")}${this.tool("bulbLive", "Idea stream", "low")}${this.tool("stream", "Streams", "low")}${this.tool("bell", "Notifications", "low")}
          <div class="spring"></div>
          ${this.tool("layers", "Object tree", "low")}${this.tool("help", "Help", "low")}
        </nav>
      </div>`;
  }
}
